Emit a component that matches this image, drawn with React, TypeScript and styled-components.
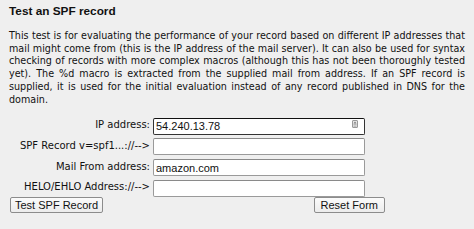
import React from "react";
import styled, { createGlobalStyle } from "styled-components";

const Global = createGlobalStyle`
  html, body { margin: 0; padding: 0; background: #efefef; }
  body { width: 474px; height: 229px; overflow: hidden; }
`;

const Panel = styled.div`
  padding: 4px 9px 0 9px;
  background: #efefef;
  color: #111;
`;

const Title = styled.h3`
  margin: 0;
  font-family: "Liberation Sans", Arial, sans-serif;
  font-weight: bold;
  font-size: 11.8px;
  line-height: 14px;
  color: #111;
`;

const Intro = styled.p`
  margin: 12px 0 0 0;
  font-family: "DejaVu Sans", Verdana, sans-serif;
  font-size: 9.6px;
  line-height: 12.7px;
  color: #111;
`;

const Line = styled.span<{ $last?: boolean }>`
  display: block;
  white-space: nowrap;
  text-align: ${(p) => (p.$last ? "left" : "justify")};
  text-align-last: ${(p) => (p.$last ? "left" : "justify")};
`;

const FormGrid = styled.form`
  margin-top: 10px;
  display: grid;
  grid-template-columns: 141px 232px;
  column-gap: 3px;
  row-gap: 3.7px;
  align-items: center;
`;

const Label = styled.label`
  font-family: "DejaVu Sans", Verdana, sans-serif;
  font-size: 10px;
  text-align: right;
  color: #111;
  white-space: nowrap;
`;

const FieldWrap = styled.div`
  position: relative;
  width: 212px;
  height: 17px;
`;

const Field = styled.input<{ $focused?: boolean }>`
  box-sizing: border-box;
  width: 212px;
  height: 17px;
  margin: 0;
  padding: 0 2px;
  border: 1px solid ${(p) => (p.$focused ? "#333" : "#9a9a9a")};
  border-top-color: ${(p) => (p.$focused ? "#111" : "#8a8a8a")};
  border-radius: 2px;
  background: #fff;
  font-family: "Liberation Sans", Arial, sans-serif;
  font-size: 11px;
  color: #111;
  outline: none;
`;

const AutofillIcon = styled.span`
  position: absolute;
  right: 7px;
  top: 4px;
  width: 6px;
  height: 8px;
  border: 1px solid #9a9a9a;
  border-radius: 1px;
  background: #e6e6e6;
  box-sizing: border-box;
  display: flex;
  align-items: center;
  justify-content: center;
`;

const ButtonCell = styled.div<{ $right?: boolean }>`
  display: flex;
  margin-top: -2px;
  justify-content: ${(p) => (p.$right ? "flex-end" : "flex-start")};
  margin-left: ${(p) => (p.$right ? "0" : "1px")};
`;

const Btn = styled.button<{ $pad?: number }>`
  box-sizing: border-box;
  height: 16px;
  padding: 0 ${(p) => p.$pad ?? 4}px;
  margin: 0;
  border: 1px solid #8c8c8c;
  border-radius: 2px;
  background: linear-gradient(#fbfbfb, #ececec);
  font-family: "Liberation Sans", Arial, sans-serif;
  font-size: 11px;
  line-height: 14px;
  color: #111;
`;

const introLines = [
  "This test is for evaluating the performance of your record based on different IP addresses that",
  "mail might come from (this is the IP address of the mail server). It can also be used for syntax",
  "checking of records with more complex macros (although this has not been thoroughly tested",
  "yet). The %d macro is extracted from the supplied mail from address. If an SPF record is",
  "supplied, it is used for the initial evaluation instead of any record published in DNS for the",
  "domain.",
];

export default function App() {
  return (
    <>
      <Global />
      <Panel>
        <Title>Test an SPF record</Title>
        <Intro>
          {introLines.map((l, i) => (
            <Line key={i} $last={i === introLines.length - 1}>
              {l}
            </Line>
          ))}
        </Intro>
        <FormGrid onSubmit={(e) => e.preventDefault()}>
          <Label htmlFor="ip">IP address:</Label>
          <FieldWrap>
            <Field id="ip" $focused defaultValue="54.240.13.78" />
            <AutofillIcon>
              <svg width="4" height="6" viewBox="0 0 4 6">
                <path d="M2 0.5 L3.5 2.5 H0.5 Z" fill="#777" />
                <rect x="0.5" y="3.5" width="3" height="0.6" fill="#888" />
                <rect x="0.5" y="4.8" width="3" height="0.6" fill="#888" />
              </svg>
            </AutofillIcon>
          </FieldWrap>
          <Label htmlFor="spf">SPF Record v=spf1...://--&gt;</Label>
          <FieldWrap>
            <Field id="spf" />
          </FieldWrap>
          <Label htmlFor="from">Mail From address:</Label>
          <FieldWrap>
            <Field id="from" defaultValue="amazon.com" />
          </FieldWrap>
          <Label htmlFor="helo">HELO/EHLO Address://--&gt;</Label>
          <FieldWrap>
            <Field id="helo" />
          </FieldWrap>
          <ButtonCell>
            <Btn type="submit">Test SPF Record</Btn>
          </ButtonCell>
          <ButtonCell $right>
            <Btn type="reset" $pad={6}>Reset Form</Btn>
          </ButtonCell>
        </FormGrid>
      </Panel>
    </>
  );
}
